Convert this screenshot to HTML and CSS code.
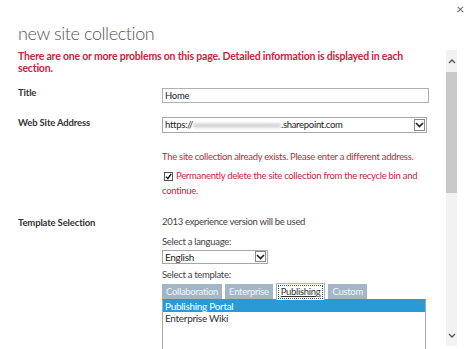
FILE: index.html
```html
<!DOCTYPE html>
<html lang="en">
<head>
  <meta charset="UTF-8" />
  <title>new site collection</title>
  <link rel="stylesheet" href="styles.css">
</head>
<body>
<div class="dialog">
  <span class="close">&#215;</span>
  <div class="content">
    <h1 class="title">new site collection</h1>
    <div class="main">
      <div class="form">
        <p class="error">There are one or more problems on this page. Detailed information is displayed in each section.</p>

        <div class="row row-title">
          <div class="label">Title</div>
          <div class="field">
            <div class="input">Home</div>
          </div>
        </div>

        <div class="row row-address">
          <div class="label">Web Site Address</div>
          <div class="field">
            <div class="select wide">
              <span class="value">https://<span class="blur"></span>.sharepoint.com</span>
              <span class="arrow"><svg width="9" height="6" viewBox="0 0 9 6"><path d="M1 1 L4.5 4.5 L8 1" fill="none" stroke="#222" stroke-width="1.6"/></svg></span>
            </div>
            <p class="msg">The site collection already exists. Please enter a different address.</p>
            <p class="msg check-line"><span class="checkbox"><svg width="7" height="7" viewBox="0 0 7 7"><path d="M1 3.6 L2.8 5.6 L6.2 0.8" fill="none" stroke="#111" stroke-width="1.4"/></svg></span>Permanently delete the site collection from the recycle bin and continue.</p>
          </div>
        </div>

        <div class="row row-template">
          <div class="label">Template Selection</div>
          <div class="field">
            <p class="note">2013 experience version will be used</p>
            <p class="note sub">Select a language:</p>
            <div class="select small">
              <span class="value">English</span>
              <span class="arrow"><svg width="9" height="6" viewBox="0 0 9 6"><path d="M1 1 L4.5 4.5 L8 1" fill="none" stroke="#222" stroke-width="1.6"/></svg></span>
            </div>
            <p class="note sub tight">Select a template:</p>
            <div class="tabs">
              <span class="tab">Collaboration</span>
              <span class="tab">Enterprise</span>
              <span class="tab active"><span class="focus">Publishing</span></span>
              <span class="tab">Custom</span>
            </div>
            <div class="list">
              <div class="item selected">Publishing Portal</div>
              <div class="item">Enterprise Wiki</div>
            </div>
          </div>
        </div>
      </div>
      <div class="scrollbar">
        <span class="sb-btn"><svg width="8" height="5" viewBox="0 0 8 5"><path d="M1 4 L4 1 L7 4" fill="none" stroke="#555" stroke-width="1.3"/></svg></span>
        <div class="sb-track"><div class="sb-thumb"></div></div>
        <span class="sb-btn"><svg width="8" height="5" viewBox="0 0 8 5"><path d="M1 1 L4 4 L7 1" fill="none" stroke="#555" stroke-width="1.3"/></svg></span>
      </div>
    </div>
  </div>
</div>
</body>
</html>
```

FILE: styles.css
```css
body {
  margin: 0;
  background: white;
  font-family: Lato, "Noto Sans", sans-serif;
  font-size: 9.5px;
  letter-spacing: -0.3px;
  color: #444;
  overflow: hidden;
}
.dialog {
  position: relative;
  width: 474px;
  height: 349px;
  overflow: hidden;
}
.close {
  position: absolute;
  top: 0;
  right: 10px;
  font-size: 14px;
  color: #666;
}
.content {
  padding: 20px 0 0 18px;
}
.title {
  margin: 0;
  font-size: 18px;
  font-weight: 300;
  letter-spacing: -0.4px;
  color: #555;
  line-height: 26px;
}
.main {
  display: flex;
  margin-top: 4px;
}
.form {
  width: 420px;
}
.error {
  margin: 0;
  color: #c4283c;
  font-size: 10.5px;
  font-weight: bold;
  letter-spacing: -0.2px;
  line-height: 12px;
  width: 400px;
}
.row {
  display: grid;
  grid-template-columns: 144px 1fr;
}
.label {
  font-weight: bold;
  letter-spacing: -0.15px;
  color: #333;
  line-height: 14px;
}
.row-title {
  margin-top: 14px;
}
.row-title .label {
  margin-top: -2px;
}
.row-address {
  margin-top: 14px;
}
.row-address .label {
  margin-top: -1px;
}
.row-template {
  margin-top: 18px;
}
.input {
  width: 263px;
  height: 13px;
  border: 1px solid #b0b0b0;
  line-height: 13px;
  padding-left: 2px;
  color: #222;
}
.select {
  display: flex;
  justify-content: space-between;
  border: 1px solid #a8a8a8;
  height: 14px;
  line-height: 14px;
  color: #222;
}
.select .value {
  padding-left: 2px;
  display: flex;
  align-items: center;
}
.select.wide {
  width: 263px;
}
.select.small {
  width: 104px;
  height: 12px;
  line-height: 12px;
  margin-top: 2px;
  font-size: 10px;
}
.select.small .arrow {
  height: 11px;
  margin: 0 1px;
}
.blur {
  display: inline-block;
  width: 88px;
  height: 5px;
  background: #d8d8d8;
  border-radius: 3px;
  filter: blur(1px);
}
.arrow {
  width: 11px;
  height: 12px;
  margin: 1px;
  border: 1px solid #888;
  box-sizing: border-box;
  display: flex;
  align-items: center;
  justify-content: center;
}
.msg {
  margin: 0;
  color: #c4283c;
  line-height: 12px;
}
.msg:first-of-type {
  margin-top: 18px;
}
.check-line {
  margin-top: 5px;
  line-height: 15px;
  width: 268px;
}
.checkbox {
  display: inline-flex;
  align-items: center;
  justify-content: center;
  width: 7px;
  height: 7px;
  border: 1px solid #555;
  margin: 0 3px 0 2px;
  vertical-align: -1px;
}
.note {
  margin: 0;
  line-height: 12px;
  color: #444;
}
.note.sub {
  margin-top: 8px;
}
.note.tight {
  margin-top: 5px;
}
.tabs {
  display: flex;
  gap: 3px;
  margin-top: 3px;
  height: 15px;
}
.tab {
  background: #a3b6c8;
  color: #f0f4f8;
  padding: 0 4px;
  line-height: 15px;
}
.tab.active {
  background: white;
  border: 1px solid #a3b6c8;
  border-bottom: none;
  padding: 1px 1px 0;
  line-height: 12px;
  color: #333;
  margin-top: -1px;
  height: 15px;
}
.tab.active .focus {
  display: block;
  border: 1px dotted #555;
  padding: 0 2px;
  text-decoration: underline;
}
.list {
  width: 262px;
  height: 60px;
  border: 1px solid #a8a8a8;
  border-top: 1px solid #2a9ad6;
  font-size: 10px;
}
.item {
  line-height: 12px;
  padding-left: 2px;
  color: #333;
}
.item.selected {
  background: #2a9ad6;
  color: white;
}
.scrollbar {
  width: 11px;
  height: 296px;
  margin-left: 8px;
  display: flex;
  flex-direction: column;
  background: #f2f2f2;
}
.sb-btn {
  height: 22px;
  display: flex;
  align-items: center;
  justify-content: center;
}
.sb-track {
  flex: 1;
}
.sb-thumb {
  height: 121px;
  background: #c8c8c8;
}
```
